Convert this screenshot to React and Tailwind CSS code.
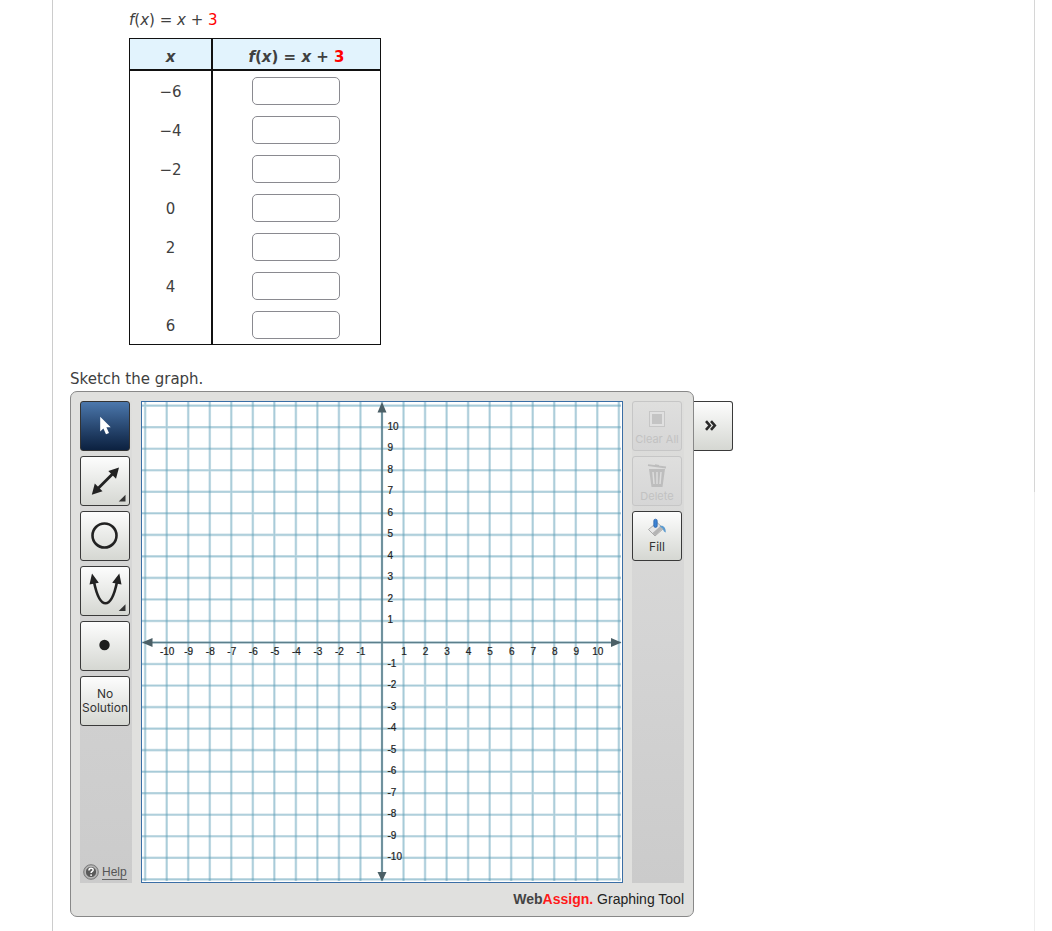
import React from "react";

const xValues = ["−6", "−4", "−2", "0", "2", "4", "6"];

const STEP = 21.53;
const CX = 240;
const CY = 240.5;
const gridTicks = Array.from({ length: 23 }, (_, i) => i - 11);
const labelTicks = gridTicks.filter((n) => n !== 0 && Math.abs(n) <= 10);

function Formula() {
  return (
    <>
      <i>f</i>(<i>x</i>) = <i>x</i> + <span className="text-[#ff0000]">3</span>
    </>
  );
}

function ValueTable() {
  return (
    <table className="mt-1.5 ml-[76px] w-[252px] table-fixed border-separate border-spacing-0 border border-[#111] text-center text-[15px]">
      <thead>
        <tr className="h-8 bg-[#e2f3fd]">
          <th scope="col" className="w-[83px] border-r-2 border-b-2 border-[#111] p-0 pt-1.5 font-bold">
            <i>x</i>
          </th>
          <th scope="col" className="border-b-2 border-[#111] p-0 pt-1.5 font-bold">
            <Formula />
          </th>
        </tr>
      </thead>
      <tbody>
        {xValues.map((v) => (
          <tr key={v} className="h-[39px]">
            <td className="border-r-2 border-[#111] p-0 pt-0.5">{v}</td>
            <td className="p-0 pr-0.5">
              <input
                type="text"
                aria-label={`f(x) for x = ${v}`}
                className="mx-auto block h-7 w-[88px] rounded-[5px] border border-[#8a8a90] bg-white px-1"
              />
            </td>
          </tr>
        ))}
      </tbody>
    </table>
  );
}

function ToolButton({ label, className = "", children, ...rest }) {
  return (
    <button
      type="button"
      aria-label={label}
      className={`flex size-[50px] shrink-0 flex-col items-center justify-center rounded-[3px] border font-['Inter',sans-serif] leading-[14px] ${className}`}
      {...rest}
    >
      {children}
    </button>
  );
}

const light = "border-[#3a3a3a] bg-linear-to-b from-[#fdfdfd] to-[#d5d7d2] text-[12px] text-[#333]";
const dark = "border-[#333] bg-linear-to-b from-[#4c78ad] to-[#0c2140] text-[12px] text-white";
const faded = "border-[#c6c6c6] bg-linear-to-b from-[#dfdfde] to-[#d6d6d6] text-[11px] text-[#c2c2c2]";

function Icon({ children }) {
  return (
    <svg viewBox="0 0 48 48" className="size-12 shrink-0" aria-hidden="true">
      {children}
    </svg>
  );
}

function LeftTools() {
  return (
    <div className="flex w-[52px] flex-col gap-[5px] bg-linear-to-b from-[#dededc] via-[#d2d2d2] to-[#cbcbcb]">
      <ToolButton label="Select" className={dark}>
        <Icon>
          <path d="M19.200 14.800v14.600l3.200-2.900 2.600 5.700 3-1.300-2.600-5.600h4.300z" fill="#fff" />
        </Icon>
      </ToolButton>
      <ToolButton label="Line" className={light}>
        <Icon>
          <path d="M16 32.500 32.500 16" stroke="#222" strokeWidth="2.800" />
          <path d="m38 10.500-3 11.200-7.700-7.700zM10.800 37.700l3-11.200 7.700 7.700z" fill="#222" />
          <path d="M44.500 37.800v6.800h-6.800z" fill="#333" />
        </Icon>
      </ToolButton>
      <ToolButton label="Circle" className={light}>
        <Icon>
          <circle cx="23.500" cy="23.500" r="12" fill="none" stroke="#222" strokeWidth="2.600" />
        </Icon>
      </ToolButton>
      <ToolButton label="Parabola" className={light}>
        <Icon>
          <path d="M13 15C15.500 27 19.500 36.300 24.500 36.300S33.500 27 36 15" fill="none" stroke="#222" strokeWidth="2.600" />
          <path d="m11 6.500 6.800 9.200-9.300 1.800zM38.300 6.500l2.200 11-9.300-1.800z" fill="#222" />
          <path d="M44.500 37.300v6.800h-6.800z" fill="#333" />
        </Icon>
      </ToolButton>
      <ToolButton label="Point" className={light}>
        <Icon>
          <circle cx="23.500" cy="23" r="5.200" fill="#1e1e1e" />
        </Icon>
      </ToolButton>
      <ToolButton className={light}>
        <span>No</span>
        <span>Solution</span>
      </ToolButton>
      <a
        href="#help"
        className="mt-auto flex items-center gap-[3px] pb-[3px] pl-[3px] font-['Liberation_Sans',sans-serif] text-[12px] leading-4 text-[#555]"
      >
        <svg viewBox="0 0 17 17" className="size-4" aria-hidden="true">
          <circle cx="8.500" cy="8.500" r="7.800" fill="#aaa" stroke="#777" strokeWidth="1" />
          <circle cx="8.500" cy="8.500" r="6" fill="#5a5a5a" stroke="#d0d0d0" strokeWidth=".8" />
          <path d="M6.300 7c0-3.300 4.500-3 4.500-.6 0 1.600-2.200 1.500-2.200 3.200" fill="none" stroke="#fff" strokeWidth="1.600" />
          <circle cx="8.600" cy="11.800" r="1" fill="#fff" />
        </svg>
        <span className="border-b border-[#666] leading-[14px]">Help</span>
      </a>
    </div>
  );
}

function RightTools() {
  return (
    <div className="flex w-[52px] flex-col gap-[5px] bg-linear-to-b from-[#dededc] via-[#d4d4d4] to-[#cbcbcb]">
      <ToolButton className={faded} disabled>
        <svg viewBox="0 0 18 18" className="mt-1 mb-1 size-[18px]" aria-hidden="true">
          <rect x="1.500" y="1.500" width="15" height="15" fill="#e0e0e0" stroke="#c6c6c6" />
          <rect x="4" y="4" width="10" height="10" fill="#c4c4c4" />
        </svg>
        <span className="whitespace-nowrap">Clear All</span>
      </ToolButton>
      <ToolButton className={faded} disabled>
        <svg viewBox="0 0 20 26" className="mt-1 h-[26px] w-5" aria-hidden="true">
          <path d="m1 2.200 18 2.300M8 2.200l4 .6" fill="none" stroke="#bdbdbd" strokeWidth="1.800" />
          <path d="M2 6h16l-2.500 18h-11z" fill="#bdbdbd" />
          <path d="m6 9 1 12M10 9v12M14 9l-1 12" stroke="#dcdcdc" strokeWidth="1.500" />
        </svg>
        <span>Delete</span>
      </ToolButton>
      <ToolButton className={light}>
        <svg viewBox="0 0 20 20" className="size-5" aria-hidden="true">
          <path d="m1.500 11.500 8.500-7 6.500 6-8.500 7.500z" fill="#e6e6e6" stroke="#999" strokeWidth=".8" />
          <path d="m8 17.500 8-7-2.500-2.500L5.500 15z" fill="#b4b4b4" />
          <path d="M12.500 8c4-1 6.300 1.500 6.300 6.500-1.500-.5-2.600-2-3-3.800z" fill="#5b9bd0" />
          <rect x="6.800" y="1.200" width="3.400" height="8.200" rx="1.600" fill="#3e83d2" stroke="#1f5ca8" strokeWidth=".7" />
        </svg>
        <span className="mt-0.5">Fill</span>
      </ToolButton>
    </div>
  );
}

function Graph() {
  return (
    <div className="border border-[#3a6ea5] bg-white">
      <svg
        viewBox="0 0 480 480"
        className="block size-[480px] font-['Liberation_Sans',sans-serif]"
        role="img"
        aria-label="Coordinate grid from -10 to 10"
      >
        {gridTicks.map((n) => (
          <g key={n} stroke="#5c9fb8" strokeOpacity=".32">
            <path d={`M${CX + n * STEP} 0V479M0 ${CY + n * STEP}H479`} strokeWidth="2.600" />
            <path d={`M${CX + n * STEP} 0V479M0 ${CY + n * STEP}H479`} strokeWidth="1.200" />
          </g>
        ))}
        <path d="M240 4V476M4 240.500H476" stroke="#4f727f" strokeOpacity=".85" strokeWidth="1.600" />
        <path
          d="m240 0 4.500 10.500h-9zM240 479.500l4.500-9.500h-9zM0 240.500l10.500-4.500v9zM479.500 240.500 469 236v9z"
          fill="#4b5f66"
        />
        <g fontSize="10" fill="#222" stroke="#222" strokeWidth=".2">
          {labelTicks.map((n) => (
            <React.Fragment key={n}>
              <text x={CX + n * STEP + 0.5} y="253" textAnchor="middle">
                {n}
              </text>
              <text x="245.500" y={CY - n * STEP + 2.5}>
                {n}
              </text>
            </React.Fragment>
          ))}
        </g>
      </svg>
    </div>
  );
}

function GraphingTool() {
  return (
    <div className="ml-[17px] flex items-start">
      <section
        aria-label="Graphing tool"
        className="rounded-[7px] border border-[#888] bg-[#e0e0de] px-[9px] pt-[9px] pb-[7px]"
      >
        <div className="flex gap-[9px]">
          <LeftTools />
          <Graph />
          <RightTools />
        </div>
        <p className="mt-1.5 text-right font-['Liberation_Sans',sans-serif] text-[14px] leading-5 text-[#222]">
          <b className="text-[#444]">
            Web<span className="text-[#ff1a1a]">Assign.</span>
          </b>{" "}
          Graphing Tool
        </p>
      </section>
      <button
        type="button"
        aria-label="Expand"
        className="mt-2.5 flex h-[50px] w-[39px] items-center justify-center rounded-r-[3px] border border-l-0 border-[#3a3a3a] bg-linear-to-b from-[#fdfdfd] to-[#d5d7d2]"
      >
        <svg viewBox="0 0 12 12" className="mr-1 size-3" aria-hidden="true">
          <path d="M1 1.200 4.800 5.500 1 9.800M6 1.200l3.800 4.300L6 9.800" fill="none" stroke="#2a2a2a" strokeWidth="2.600" />
        </svg>
      </button>
    </div>
  );
}

export default function App() {
  return (
    <div className="flex min-h-screen bg-white pr-[17px] pl-[52px] font-[Verdana,'DejaVu_Sans',sans-serif] text-[15px] leading-6 text-[#404040]">
      <main className="min-w-0 flex-1 border-l border-[#ccc] pt-2 pb-3.5">
        <p className="ml-[76px]">
          <Formula />
        </p>
        <ValueTable />
        <p className="mt-[23px] ml-[17px] leading-[23px]">Sketch the graph.</p>
        <GraphingTool />
      </main>
      <div className="flex w-px flex-col bg-[#eee]">
        <div className="h-[492px] bg-[#d6d6d6]" />
      </div>
    </div>
  );
}
